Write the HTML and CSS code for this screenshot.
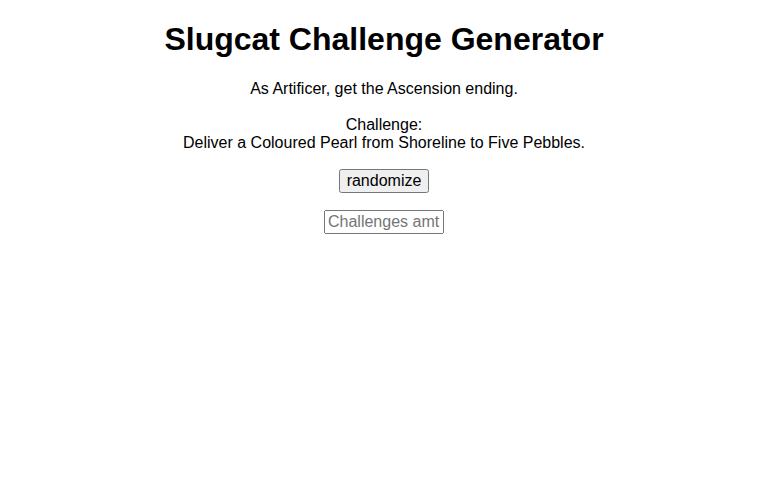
FILE: index.html
```html
<!DOCTYPE html>
<html lang="en">
<head>
  <meta charset="UTF-8">
  <title>Slugcat Challenge Generator</title>
  <link rel="stylesheet" href="styles.css">
</head>
<body>

  <h1>Slugcat Challenge Generator</h1>

  <p id="goal">As Artificer, get the Ascension ending.<br><br>Challenge:<br>Deliver a Coloured Pearl from Shoreline to Five Pebbles.</p>

  <div class="controls">
    <button id="roll">randomize</button>
    <input id="amount" type="text" placeholder="Challenges amt">
  </div>

</body>
</html>
```

FILE: styles.css
```css
body {
  font-family: "Liberation Sans", Arial, sans-serif;
  font-size: 16px;
  margin: 0;
  padding: 8px;
  text-align: center;
}

h1 {
  font-size: 32px;
  margin: 13px 0 22px;
}

p {
  margin: 0;
  line-height: 18px;
}

.controls {
  display: flex;
  flex-direction: column;
  align-items: center;
  gap: 17px;
  margin-top: 17px;
}

button {
  font-family: inherit;
  font-size: 16px;
}

input {
  font-family: inherit;
  font-size: 16px;
  width: 112px;
}
```
